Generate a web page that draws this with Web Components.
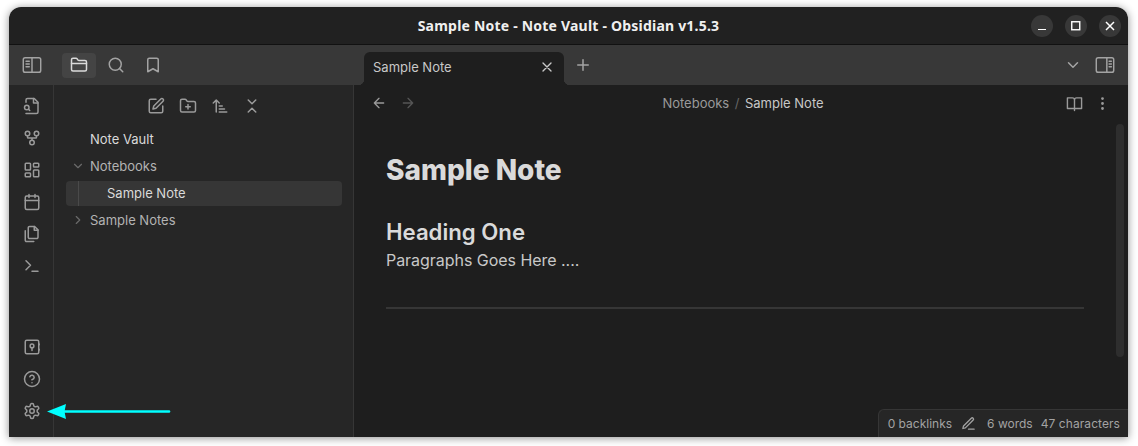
<!DOCTYPE html>
<html lang="en">
<head>
<meta charset="utf-8">
<title>Sample Note - Note Vault - Obsidian v1.5.3</title>
<style>
  html, body { margin: 0; height: 100%; background: #fff; overflow: hidden; }
  body { font-family: Inter, "Liberation Sans", sans-serif; padding: 7px 10px 9px 9px; box-sizing: border-box; }
</style>
</head>
<body>
<ob-window>
  <ob-titlebar slot="top">Sample Note - Note Vault - Obsidian v1.5.3</ob-titlebar>
  <ob-tabbar slot="top"></ob-tabbar>
  <ob-ribbon></ob-ribbon>
  <ob-files></ob-files>
  <ob-view></ob-view>
</ob-window>
<ob-arrow></ob-arrow>

<script>
const ICONS = {
  sideleft: '<rect x="2.5" y="4" width="19" height="16" rx="2"/><path d="M12 4v16M5.5 8H9M5.5 11H9M5.5 14H9"/>',
  sideright: '<rect x="2.5" y="4" width="19" height="16" rx="2"/><path d="M14 4v16M16.5 8H19M16.5 11H19M16.5 14H19"/>',
  folder: '<path d="M4 20h16a2 2 0 0 0 2-2V8a2 2 0 0 0-2-2h-7.93a2 2 0 0 1-1.66-.9l-.82-1.2A2 2 0 0 0 7.93 3H4a2 2 0 0 0-2 2v13c0 1.1.9 2 2 2Z"/><path d="M2 10h20"/>',
  search: '<circle cx="11" cy="11" r="8"/><path d="m21 21-4.3-4.3"/>',
  bookmark: '<path d="m19 21-7-4-7 4V5a2 2 0 0 1 2-2h10a2 2 0 0 1 2 2v16z"/>',
  edit: '<path d="M12 3H5a2 2 0 0 0-2 2v14a2 2 0 0 0 2 2h14a2 2 0 0 0 2-2v-7"/><path d="M18.375 2.625a2.121 2.121 0 1 1 3 3L12 15l-4 1 1-4Z"/>',
  folderplus: '<path d="M12 10v6M9 13h6"/><path d="M20 20a2 2 0 0 0 2-2V8a2 2 0 0 0-2-2h-7.9a2 2 0 0 1-1.69-.9L9.6 3.9A2 2 0 0 0 7.93 3H4a2 2 0 0 0-2 2v13a2 2 0 0 0 2 2Z"/>',
  sort: '<path d="m3 8 4-4 4 4M7 4v16M11 12h4M11 16h7M11 20h10"/>',
  collapse: '<path d="m7 20 5-5 5 5M7 4l5 5 5-5"/>',
  filesearch: '<path d="M4 22h14a2 2 0 0 0 2-2V7l-5-5H6a2 2 0 0 0-2 2v3"/><path d="M14 2v6h6"/><circle cx="5" cy="14" r="3"/><path d="m9 18-1.5-1.5"/>',
  graph: '<circle cx="12" cy="18" r="3"/><circle cx="6" cy="6" r="3"/><circle cx="18" cy="6" r="3"/><path d="M18 9v2c0 .6-.4 1-1 1H7c-.6 0-1-.4-1-1V9M12 12v3"/>',
  dashboard: '<rect x="3" y="3" width="7" height="9" rx="1"/><rect x="14" y="3" width="7" height="5" rx="1"/><rect x="14" y="12" width="7" height="9" rx="1"/><rect x="3" y="16" width="7" height="5" rx="1"/>',
  calendar: '<rect x="3" y="4" width="18" height="18" rx="2"/><path d="M16 2v4M8 2v4M3 10h18"/>',
  files: '<path d="M15.5 2H8.6c-.4 0-.8.2-1.1.5-.3.3-.5.7-.5 1.1v12.8c0 .4.2.8.5 1.1.3.3.7.5 1.1.5h9.8c.4 0 .8-.2 1.1-.5.3-.3.5-.7.5-1.1V6.5L15.5 2z"/><path d="M3 7.6v12.8c0 .4.2.8.5 1.1.3.3.7.5 1.1.5h9.8"/><path d="M15 2v5h5"/>',
  terminal: '<path d="m4 17 6-6-6-6M12 19h8"/>',
  vault: '<rect x="3" y="3" width="18" height="18" rx="2"/><circle cx="12" cy="10.5" r="2.5"/><path d="M12 13v3.5M21.5 8v1M21.5 15v1"/>',
  help: '<circle cx="12" cy="12" r="10"/><path d="M9.09 9a3 3 0 0 1 5.83 1c0 2-3 3-3 3M12 17h.01"/>',
  gear: '<path d="M12.22 2h-.44a2 2 0 0 0-2 2v.18a2 2 0 0 1-1 1.73l-.43.25a2 2 0 0 1-2 0l-.15-.08a2 2 0 0 0-2.73.73l-.22.38a2 2 0 0 0 .73 2.73l.15.1a2 2 0 0 1 1 1.72v.51a2 2 0 0 1-1 1.74l-.15.09a2 2 0 0 0-.73 2.73l.22.38a2 2 0 0 0 2.73.73l.15-.08a2 2 0 0 1 2 0l.43.25a2 2 0 0 1 1 1.73V20a2 2 0 0 0 2 2h.44a2 2 0 0 0 2-2v-.18a2 2 0 0 1 1-1.73l.43-.25a2 2 0 0 1 2 0l.15.08a2 2 0 0 0 2.73-.73l.22-.39a2 2 0 0 0-.73-2.73l-.15-.08a2 2 0 0 1-1-1.74v-.5a2 2 0 0 1 1-1.74l.15-.09a2 2 0 0 0 .73-2.73l-.22-.38a2 2 0 0 0-2.73-.73l-.15.08a2 2 0 0 1-2 0l-.43-.25a2 2 0 0 1-1-1.73V4a2 2 0 0 0-2-2z"/><circle cx="12" cy="12" r="3"/>',
  book: '<path d="M2 4h7a3 3 0 0 1 3 3v15M22 4h-7a3 3 0 0 0-3 3v15M12 19H2V4M12 19h10V4"/>',
  more: '<circle cx="12" cy="5" r="1"/><circle cx="12" cy="12" r="1"/><circle cx="12" cy="19" r="1"/>',
  pencil: '<path d="M12 21h9"/><path d="M16.5 3.5a2.12 2.12 0 0 1 3 3L7 19l-4 1 1-4Z"/>',
  x: '<path d="M18 6 6 18M6 6l12 12"/>',
  plus: '<path d="M5 12h14M12 5v14"/>',
  left: '<path d="m12 19-7-7 7-7M19 12H5"/>',
  right: '<path d="M5 12h14M12 5l7 7-7 7"/>',
  down: '<path d="m6 9 6 6 6-6"/>',
  chevright: '<path d="m9 18 6-6-6-6"/>'
};

customElements.define('ob-icon', class extends HTMLElement {
  connectedCallback() {
    const size = this.getAttribute('size') || 18;
    const sw = this.getAttribute('sw') || 2;
    this.attachShadow({ mode: 'open' }).innerHTML = `<style>
      :host { display: inline-flex; width: ${size}px; height: ${size}px; flex: none; }
      svg { width: 100%; height: 100%; fill: none; stroke: currentColor; stroke-width: ${sw}; stroke-linecap: round; stroke-linejoin: round; }
      </style><svg viewBox="0 0 24 24">${ICONS[this.getAttribute('name')]}</svg>`;
  }
});

customElements.define('ob-window', class extends HTMLElement {
  constructor() {
    super();
    this.attachShadow({ mode: 'open' }).innerHTML = `<style>
      :host {
        display: flex; flex-direction: column; height: 100%;
        border-radius: 12px 12px 0 0; overflow: hidden;
        box-shadow: 0 1px 9px rgba(0,0,0,.45);
        color: #dadada;
      }
      .body { flex: 1; min-height: 0; display: flex; }
      </style>
      <slot name="top"></slot>
      <div class="body"><slot></slot></div>`;
  }
});

customElements.define('ob-titlebar', class extends HTMLElement {
  constructor() {
    super();
    this.attachShadow({ mode: 'open' }).innerHTML = `<style>
      :host {
        display: flex; align-items: center; justify-content: center; position: relative;
        height: 37px; box-sizing: content-box; background: #212121; border-bottom: 1px solid #111;
        font: 700 14px "Noto Sans", sans-serif; letter-spacing: .21px; color: #f0f0f0;
      }
      .controls { position: absolute; right: 7px; top: 8px; display: flex; gap: 12px; }
      .controls span { width: 22px; height: 22px; border-radius: 50%; background: #383838; display: flex; align-items: center; justify-content: center; color: #fff; }
      </style>
      <slot></slot>
      <div class="controls">
        <span><svg width="10" height="10" viewBox="0 0 10 10"><path d="M1 8.5h8" stroke="#fff" stroke-width="1"/></svg></span>
        <span><svg width="10" height="10" viewBox="0 0 10 10"><rect x=".75" y=".75" width="8" height="8" fill="none" stroke="#fff" stroke-width="1.4"/></svg></span>
        <span><svg width="10" height="10" viewBox="0 0 10 10"><path d="M1 1l8 8M9 1l-8 8" stroke="#fff" stroke-width="1.5"/></svg></span>
      </div>`;
  }
});

customElements.define('ob-tabbar', class extends HTMLElement {
  constructor() {
    super();
    this.attachShadow({ mode: 'open' }).innerHTML = `<style>
      :host { display: flex; height: 40px; background: #383838; color: #a3a3a3; font: 13px Inter, sans-serif; }
      .left { width: 345px; flex: none; display: flex; align-items: center; box-sizing: border-box; padding: 0 0 0 10px; }
      .toggle { width: 26px; display: flex; justify-content: center; margin-right: 17px; }
      .side { display: flex; gap: 3px; }
      .side span { width: 34px; height: 25px; border-radius: 4px; display: flex; align-items: center; justify-content: center; }
      .side span.on { background: #444; color: #dadada; }
      .main { flex: 1; display: flex; align-items: flex-end; padding-left: 10px; }
      .tab {
        width: 200px; height: 33px; box-sizing: border-box; background: #1e1e1e; color: #c8c8c8;
        border-radius: 6px 6px 0 0; display: flex; align-items: center; justify-content: space-between;
        padding: 0 9px 3px 9px; position: relative;
      }
      .tab::before, .tab::after { content: ""; position: absolute; bottom: 0; width: 6px; height: 6px; }
      .tab::before { left: -6px; background: radial-gradient(circle at 0 0, transparent 6px, #1e1e1e 6.5px); }
      .tab::after { right: -6px; background: radial-gradient(circle at 100% 0, transparent 6px, #1e1e1e 6.5px); }
      .plus { display: flex; align-self: center; margin-left: 10px; }
      .end { margin-left: auto; align-self: center; display: flex; align-items: center; gap: 12px; padding-right: 12px; }
      </style>
      <div class="left">
        <div class="toggle"><ob-icon name="sideleft" size="22" sw="1.6"></ob-icon></div>
        <div class="side">
          <span class="on"><ob-icon name="folder" size="18"></ob-icon></span>
          <span><ob-icon name="search" size="18"></ob-icon></span>
          <span><ob-icon name="bookmark" size="18"></ob-icon></span>
        </div>
      </div>
      <div class="main">
        <div class="tab">Sample Note<ob-icon name="x" size="16"></ob-icon></div>
        <div class="plus"><ob-icon name="plus" size="18"></ob-icon></div>
        <div class="end"><ob-icon name="down" size="18"></ob-icon><ob-icon name="sideright" size="22" sw="1.6"></ob-icon></div>
      </div>`;
  }
});

customElements.define('ob-ribbon', class extends HTMLElement {
  constructor() {
    super();
    const ic = n => `<ob-icon name="${n}" size="18"></ob-icon>`;
    this.attachShadow({ mode: 'open' }).innerHTML = `<style>
      :host {
        display: flex; flex-direction: column; justify-content: space-between; align-items: center;
        width: 45px; flex: none; box-sizing: border-box; background: #262626; border-right: 1px solid #363636;
        padding: 12px 0 17px 2px; color: #9a9a9a;
      }
      .group { display: flex; flex-direction: column; gap: 14px; }
      </style>
      <div class="group">${['filesearch','graph','dashboard','calendar','files','terminal'].map(ic).join('')}</div>
      <div class="group">${['vault','help','gear'].map(ic).join('')}</div>`;
  }
});

customElements.define('tree-item', class extends HTMLElement {
  constructor() {
    super();
    this.attachShadow({ mode: 'open' }).innerHTML = `<style>
      :host {
        display: flex; align-items: center; height: 25px; margin-bottom: 2px; border-radius: 4px;
        color: #b3b3b3; font-size: 13px; padding: 0 0 2px 24px; position: relative; box-sizing: border-box;
      }
      :host([root]) { color: #dadada; }
      :host([active]) { background: #363636; color: #dadada; padding-left: 41px; }
      :host([active])::before { content: ""; position: absolute; left: 12px; top: 0; bottom: 0; width: 1px; background: #4a4a4a; }
      .chev { position: absolute; left: 5px; top: 5px; color: #6a6a6a; display: flex; }
      </style>
      <span class="chev"></span><slot></slot>`;
    const c = this.getAttribute('chevron');
    if (c) this.shadowRoot.querySelector('.chev').innerHTML = `<ob-icon name="${c}" size="14"></ob-icon>`;
  }
});

customElements.define('ob-files', class extends HTMLElement {
  constructor() {
    super();
    this.attachShadow({ mode: 'open' }).innerHTML = `<style>
      :host {
        display: flex; flex-direction: column; width: 300px; flex: none; box-sizing: border-box;
        background: #262626; border-right: 1px solid #363636; color: #9a9a9a; font-family: Inter, sans-serif;
      }
      .tools { height: 42px; display: flex; align-items: center; justify-content: center; gap: 14px; }
      .tree { padding: 0 11px 0 12px; }
      </style>
      <div class="tools">
        <ob-icon name="edit" size="18"></ob-icon>
        <ob-icon name="folderplus" size="18"></ob-icon>
        <ob-icon name="sort" size="18"></ob-icon>
        <ob-icon name="collapse" size="18"></ob-icon>
      </div>
      <div class="tree">
        <tree-item root>Note Vault</tree-item>
        <tree-item chevron="down">Notebooks</tree-item>
        <tree-item active>Sample Note</tree-item>
        <tree-item chevron="chevright">Sample Notes</tree-item>
      </div>`;
  }
});

customElements.define('ob-view', class extends HTMLElement {
  constructor() {
    super();
    this.attachShadow({ mode: 'open' }).innerHTML = `<style>
      :host {
        flex: 1; min-width: 0; display: flex; flex-direction: column; position: relative;
        background: #1e1e1e; color: #dadada; font-family: Inter, sans-serif;
      }
      nav { height: 36px; display: flex; align-items: center; padding: 0 17px 0 17px; color: #9a9a9a; }
      nav .arrows { display: flex; gap: 13px; width: 220px; }
      nav .dim { color: #555; }
      nav .crumb { flex: 1; text-align: center; font-size: 13px; color: #9a9a9a; padding-left: 4px; }
      nav .crumb i { font-style: normal; color: #666; margin: 0 5.5px; }
      nav .crumb b { font-weight: 400; color: #c8c8c8; }
      nav .acts { display: flex; gap: 11px; width: 220px; justify-content: flex-end; }
      .page { flex: 1; display: flex; min-height: 0; }
      article { flex: 1; padding: 0 32px; }
      h1 { margin: 32px 0 0; font-size: 28px; line-height: 34px; font-weight: 800; }
      h2 { margin: 30px 0 0; font-size: 22.2px; line-height: 30px; font-weight: 600; }
      p { margin: 0; font-size: 16px; line-height: 26px; color: #c8c8c8; letter-spacing: -.04px; }
      hr { border: 0; height: 2px; background: #363636; margin: 34px 0 0; }
      .bar { width: 8px; height: 233px; margin: 3px 4px 0 0; border-radius: 4px; background: #2e2e2e; flex: none; }
      ob-status { position: absolute; right: 0; bottom: 0; }
      </style>
      <nav>
        <div class="arrows"><ob-icon name="left" size="16"></ob-icon><ob-icon class="dim" name="right" size="16"></ob-icon></div>
        <div class="crumb">Notebooks<i>/</i><b>Sample Note</b></div>
        <div class="acts"><ob-icon name="book" size="17"></ob-icon><ob-icon name="more" size="17"></ob-icon></div>
      </nav>
      <div class="page">
        <article>
          <h1>Sample Note</h1>
          <h2>Heading One</h2>
          <p>Paragraphs Goes Here ....</p>
          <hr>
        </article>
        <div class="bar"></div>
      </div>
      <ob-status></ob-status>`;
  }
});

customElements.define('ob-status', class extends HTMLElement {
  constructor() {
    super();
    this.attachShadow({ mode: 'open' }).innerHTML = `<style>
      :host {
        display: flex; align-items: center; height: 28px; box-sizing: border-box;
        background: #262626; border: 1px solid #363636; border-width: 1px 0 0 1px; border-radius: 6px 0 0 0;
        padding: 0 8px 0 9px; font-size: 12px; color: #a3a3a3;
      }
      .pen { display: flex; margin: 0 11px 0 9px; }
      .gap { margin-left: 8px; letter-spacing: .07px; }
      </style>
      <span>0 backlinks</span>
      <span class="pen"><ob-icon name="pencil" size="15"></ob-icon></span>
      <span>6 words</span>
      <span class="gap">47 characters</span>`;
  }
});

customElements.define('ob-arrow', class extends HTMLElement {
  constructor() {
    super();
    this.attachShadow({ mode: 'open' }).innerHTML = `<style>
      :host { position: absolute; left: 47px; top: 403px; width: 124px; height: 17px; display: block; }
      </style>
      <svg width="124" height="17" viewBox="0 0 124 17"><path d="M0 8.5 19 1l-1.5 7.5L19 16Z" fill="#00ffff"/><path d="M15 8.5h107" stroke="#00ffff" stroke-width="2.6" stroke-linecap="round"/></svg>`;
  }
});
</script>
</body>
</html>
